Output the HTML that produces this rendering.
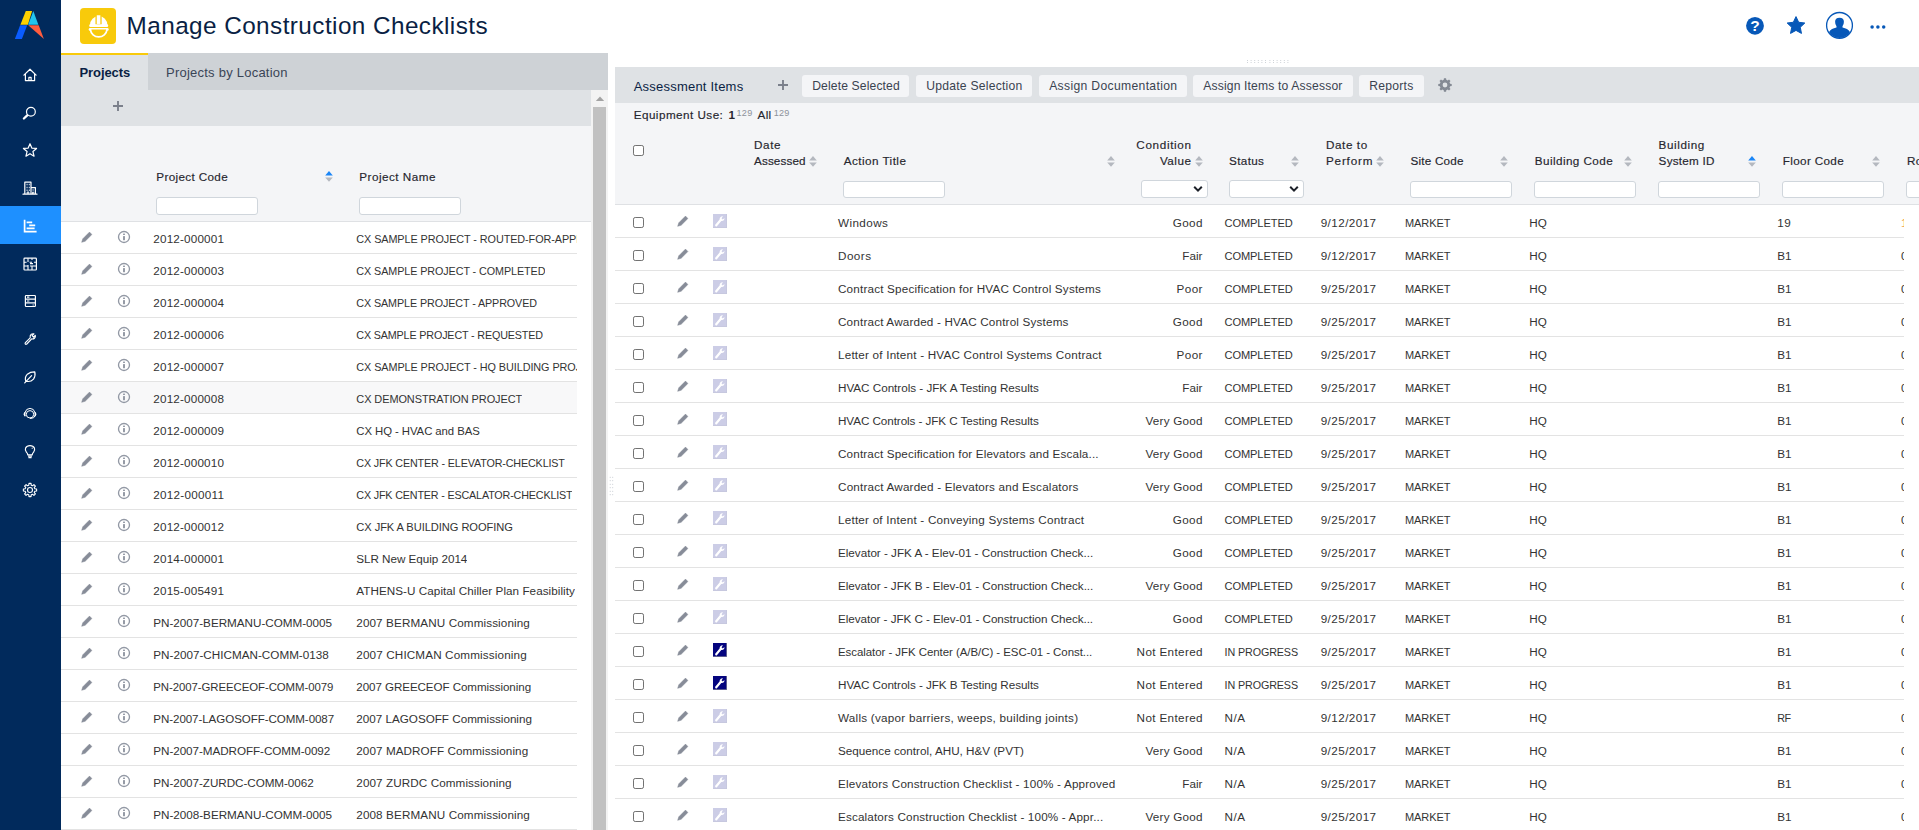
<!DOCTYPE html><html lang="en"><head><meta charset="utf-8"><title>Manage Construction Checklists</title><style>
*{box-sizing:border-box;margin:0;padding:0}
html,body{width:1919px;height:830px;overflow:hidden;background:#fff}
body{font-family:"Liberation Sans",sans-serif;color:#333;position:relative}
.abs,.t,svg.i{position:absolute}
.t{white-space:nowrap;line-height:16px;display:block}
.sb{-webkit-text-stroke:0.16px currentColor}
.b{font-weight:bold}
.hd{color:#26262e}
.inp{position:absolute;background:#fff;border:1px solid #d0d6dc;border-radius:3px}
.btn{position:absolute;top:75px;height:22px;background:#f4f5f7;border-radius:3px}
.ln{position:absolute;height:1px;background:#e3e3e3}
.cb{position:absolute;width:11px;height:11px;border:1.2px solid #727272;border-radius:2.2px;background:#fff}
</style></head><body>
<div class="abs" style="left:0;top:0;width:61px;height:830px;background:#012a5c"></div>
<div class="abs" style="left:0;top:206px;width:61px;height:38px;background:#1e90ff"></div>
<svg class="i" style="left:0;top:0" width="61" height="50" viewBox="0 0 61 50">
<polygon points="25.8,11 32.1,11 27.9,24.7 20.4,24.7" fill="#fdd000"/>
<polygon points="20.1,25.3 27.2,25.3 21.9,38.9 14.9,38.9" fill="#0a5cff"/>
<polygon points="33.3,11 28.2,24.7 38.4,24.7" fill="#22c4ee"/>
<polygon points="28.2,25.3 38.7,25.3 43.9,38.9" fill="#ff5c3e"/>
</svg>
<svg class="i" style="left:22.2px;top:67.0px" width="16" height="16" viewBox="0 0 16 16"><path d="M1.9 8.1 L8 2.2 L14.1 8.1 M3.4 7.2 V13.6 H12.6 V7.2 M6.9 13.6 V10.3 H9.1 V13.6" stroke="#fff" fill="none" stroke-width="1.2" stroke-linejoin="round" stroke-linecap="round"/></svg>
<svg class="i" style="left:22.2px;top:104.7px" width="16" height="16" viewBox="0 0 16 16"><circle cx="8.9" cy="6.7" r="4.4" stroke="#fff" fill="none" stroke-width="1.2" stroke-linejoin="round" stroke-linecap="round"/><path d="M5.2 10.4 L1.9 13.5" stroke="#fff" stroke-width="2.3" stroke-linecap="round"/></svg>
<svg class="i" style="left:22.2px;top:142.4px" width="16" height="16" viewBox="0 0 16 16"><polygon points="8.00,1.70 9.82,6.09 14.56,6.47 10.95,9.56 12.06,14.18 8.00,11.70 3.94,14.18 5.05,9.56 1.44,6.47 6.18,6.09" stroke="#fff" fill="none" stroke-width="1.2" stroke-linejoin="round" stroke-linecap="round"/></svg>
<svg class="i" style="left:22.2px;top:180.1px" width="16" height="16" viewBox="0 0 16 16"><path d="M2.8 14 V2.2 H9 V14 M9 7.6 H13.4 V14 M1 14.2 H15" stroke="#fff" fill="none" stroke-width="1.2" stroke-linejoin="round" stroke-linecap="round"/><path d="M4.6 4.6h0.9M6.8 4.6h0.9M4.6 7.4h0.9M6.8 7.4h0.9M4.6 10.2h0.9M6.8 10.2h0.9M10.6 10h0.9" stroke="#fff" stroke-width="1.5" fill="none"/><path d="M5.2 14v-2h1.6v2M10.4 14v-1.8h1.4v1.8" stroke="#fff" stroke-width="1" fill="none"/></svg>
<svg class="i" style="left:22.2px;top:217.8px" width="16" height="16" viewBox="0 0 16 16"><path d="M2.6 1.8 V13.6 H14.6" stroke="#fff" stroke-width="1.7" fill="none"/><path d="M4.6 4.4 H10.2 M7.2 7.4 H13.2 M4.6 10.4 H12.6" stroke="#fff" stroke-width="1.7" fill="none"/></svg>
<svg class="i" style="left:22.2px;top:255.5px" width="16" height="16" viewBox="0 0 16 16"><rect x="2" y="2.2" width="12.4" height="11.8" rx="0.8" stroke="#fff" fill="none" stroke-width="1.2" stroke-linejoin="round" stroke-linecap="round"/><path d="M6 2.2 V6 M6 9 V14 M2 6.2 H4.6 M7.6 6.2 H10 M12 6.2 H14.4 M10 2.2 V4 M2 10 H6 M8 10 H14.4 M10 10 V14 M8 7.6 H11" stroke="#fff" stroke-width="1.1" fill="none"/></svg>
<svg class="i" style="left:22.2px;top:293.2px" width="16" height="16" viewBox="0 0 16 16"><rect x="3.4" y="2.5" width="10" height="11" rx="0.8" stroke="#fff" fill="none" stroke-width="1.2" stroke-linejoin="round" stroke-linecap="round"/><path d="M3.4 6.1 H13.4 M3.4 9.9 H13.4" stroke="#fff" stroke-width="1.1" fill="none"/><path d="M5 4.1h2.4M5 8h2.4M10.6 12h1.2" stroke="#fff" stroke-width="1.1" fill="none"/></svg>
<svg class="i" style="left:22.2px;top:330.9px" width="16" height="16" viewBox="0 0 16 16"><path d="M3.4 11.6 L8.2 6.8 Q7.7 4.6 9.3 3.3 Q10.6 2.5 11.9 2.9 L10.1 4.7 L11.5 6.1 L13.3 4.3 Q13.7 5.8 12.7 7 Q11.5 8.3 9.7 7.9 L4.8 13 Q3.9 13.6 3.3 13 Q2.8 12.3 3.4 11.6 Z" stroke="#fff" fill="none" stroke-width="1.15" stroke-linejoin="round"/></svg>
<svg class="i" style="left:22.2px;top:368.6px" width="16" height="16" viewBox="0 0 16 16"><path d="M3.8 12.2 Q2.4 8.2 5.4 5.2 Q8.4 2.8 12.8 2.9 Q13.7 7 11.5 10.1 Q8.6 13.4 3.8 12.2 Z M2.7 13.8 L9.6 6.6" stroke="#fff" fill="none" stroke-width="1.2" stroke-linejoin="round" stroke-linecap="round" stroke-width="1.15"/></svg>
<svg class="i" style="left:22.2px;top:406.3px" width="16" height="16" viewBox="0 0 16 16"><circle cx="8" cy="8.3" r="3.7" stroke="#fff" fill="none" stroke-width="1"/><path d="M2.9 9.6 Q1.9 8.2 2.9 6.8 M13.1 6.8 Q14.1 8.2 13.1 9.6" stroke="#fff" stroke-width="1.7" fill="none" stroke-linecap="round"/><path d="M3.1 6.4 Q4 2.5 8 2.4 Q12 2.5 12.9 6.4" stroke="#fff" fill="none" stroke-width="1"/><path d="M12.9 10 Q12.3 12.3 9 12.3" stroke="#fff" fill="none" stroke-width="1"/><circle cx="8.6" cy="12.3" r="0.8" fill="#fff"/></svg>
<svg class="i" style="left:22.2px;top:444.0px" width="16" height="16" viewBox="0 0 16 16"><path d="M5.8 10.8 Q5.6 9.4 4.4 8.2 Q2.8 6.2 3.6 4 Q4.8 1.6 8 1.6 Q11.2 1.6 12.4 4 Q13.2 6.2 11.6 8.2 Q10.4 9.4 10.2 10.8 Z" stroke="#fff" fill="none" stroke-width="1.2" stroke-linejoin="round" stroke-linecap="round"/><path d="M6 12.2 H10 M6.4 13.6 H9.6" stroke="#fff" stroke-width="1.3" fill="none"/><circle cx="10.2" cy="4.2" r="0.6" fill="#fff"/></svg>
<svg class="i" style="left:22.2px;top:481.7px" width="16" height="16" viewBox="0 0 16 16"><path d="M12.85 6.79 L14.62 6.96 L14.62 9.04 L12.85 9.21 L12.28 10.58 L13.42 11.94 L11.94 13.42 L10.58 12.28 L9.21 12.85 L9.04 14.62 L6.96 14.62 L6.79 12.85 L5.42 12.28 L4.06 13.42 L2.58 11.94 L3.72 10.58 L3.15 9.21 L1.38 9.04 L1.38 6.96 L3.15 6.79 L3.72 5.42 L2.58 4.06 L4.06 2.58 L5.42 3.72 L6.79 3.15 L6.96 1.38 L9.04 1.38 L9.21 3.15 L10.58 3.72 L11.94 2.58 L13.42 4.06 L12.28 5.42Z" stroke="#fff" fill="none" stroke-width="1.1" stroke-linejoin="round"/><circle cx="8" cy="8" r="2.5" stroke="#fff" fill="none" stroke-width="1.1"/></svg>
<div class="abs" style="left:80px;top:8px;width:36px;height:36px;border-radius:4px;background:#f8ca0b"></div>
<svg class="i" style="left:80px;top:8px" width="36" height="36" viewBox="80 8 36 36"><path d="M90 25 A8.7 8.9 0 0 1 107.4 25 Z" fill="#fff"/><rect x="96.1" y="14.6" width="4.9" height="10" fill="#fff" stroke="#f8ca0b" stroke-width="1.3"/><rect x="89.2" y="24.2" width="19" height="2.8" rx="1.2" fill="#fff"/><rect x="90" y="28" width="17.4" height="1.5" fill="#fff"/><path d="M90.4 29.6 A8.35 8.2 0 0 0 107 29.6" stroke="#fff" stroke-width="1.7" fill="none"/><circle cx="90" cy="29.4" r="1.3" fill="#fff"/><circle cx="107.4" cy="29.4" r="1.3" fill="#fff"/></svg>
<span class="t " style="top:10.38px;font-size:24.30px;letter-spacing:0.434px;line-height:32px;left:126.60px;color:#0a1f44;">Manage Construction Checklists</span>
<svg class="i" style="left:1745px;top:15px" width="20" height="21" viewBox="1745 15 20 21"><circle cx="1755" cy="25.8" r="8.9" fill="#0758b8"/><text x="1755" y="31.3" text-anchor="middle" font-family="Liberation Sans, sans-serif" font-weight="bold" font-size="15.5" fill="#fff">?</text></svg>
<svg class="i" style="left:1785px;top:14px" width="22" height="22" viewBox="1785 14 22 22"><polygon points="1796.00,16.60 1798.65,22.26 1804.84,23.03 1800.28,27.29 1801.47,33.42 1796.00,30.40 1790.53,33.42 1791.72,27.29 1787.16,23.03 1793.35,22.26" fill="#0758b8" stroke="#0758b8" stroke-width="1" stroke-linejoin="round"/></svg>
<svg class="i" style="left:1825px;top:11px" width="29" height="29" viewBox="1825 11 29 29"><defs><clipPath id="pc"><circle cx="1839.5" cy="25.4" r="12.6"/></clipPath></defs><circle cx="1839.5" cy="25.4" r="12.9" fill="#fff" stroke="#0758b8" stroke-width="1.3"/><g clip-path="url(#pc)" fill="#0758b8"><path d="M1835.1 21.8 Q1835.1 17.7 1839.5 17.7 Q1843.9 17.7 1843.9 21.8 Q1843.9 24.8 1842.5 26.3 V27.4 Q1847.8 28.4 1849.8 31.8 L1851 40 H1828 L1829.2 31.8 Q1831.2 28.4 1836.5 27.4 V26.3 Q1835.1 24.8 1835.1 21.8Z"/></g></svg>
<svg class="i" style="left:1869px;top:24px" width="18" height="6" viewBox="1869 24 18 6"><circle cx="1872.1" cy="26.9" r="1.75" fill="#0758b8"/><circle cx="1877.9" cy="26.9" r="1.75" fill="#0758b8"/><circle cx="1883.7" cy="26.9" r="1.75" fill="#0758b8"/></svg>
<div class="abs" style="left:61px;top:53px;width:547px;height:37px;background:#ced2d6"></div>
<div class="abs" style="left:61px;top:53px;width:87px;height:37px;background:#dfe2e5;border-top:2px solid #f8ca0b"></div>
<div class="abs" style="left:61px;top:90px;width:530px;height:36px;background:#dfe2e5"></div>
<div class="abs" style="left:61px;top:126px;width:530px;height:96px;background:#f4f5f7;border-bottom:1px solid #dfe1e4"></div>
<span class="t b" style="top:64.50px;font-size:13.00px;letter-spacing:-0.083px;left:79.50px;color:#0a1f44;">Projects</span>
<span class="t " style="top:64.50px;font-size:13.00px;letter-spacing:0.235px;left:166.00px;color:#3a4556;">Projects by Location</span>
<svg class="i" style="left:112px;top:100px" width="12" height="12" viewBox="0 0 12 12"><path d="M6 1v10M1 6h10" stroke="#7b808b" stroke-width="1.9" fill="none"/></svg>
<span class="t sb hd" style="top:168.95px;font-size:11.70px;letter-spacing:0.348px;left:156.30px;">Project Code</span>
<span class="t sb hd" style="top:168.95px;font-size:11.70px;letter-spacing:0.485px;left:359.30px;">Project Name</span>
<div class="inp" style="left:156px;top:197px;width:102px;height:18px"></div>
<div class="inp" style="left:359px;top:197px;width:102px;height:18px"></div>
<svg class="i" style="left:324.6px;top:170.8px" width="8" height="12" viewBox="0 0 8 12"><path d="M0.2 4.5 L4 0 L7.8 4.5Z" fill="#1a86f7"/><path d="M0.2 6.5 L4 10.8 L7.8 6.5Z" fill="#b4b8bf"/></svg>
<div class="ln" style="left:61px;top:253.0px;width:516px"></div>
<svg class="i" style="left:81.3px;top:230.8px" width="12" height="12" viewBox="0 0 12 12"><path d="M8.5 1.1 L10.9 3.5 L4.2 10.2 L0.7 11.3 L1.8 7.8 Z" fill="#878c98" stroke="#878c98" stroke-width="0.5" stroke-linejoin="round"/></svg>
<svg class="i" style="left:117.0px;top:230.2px" width="14" height="14" viewBox="0 0 14 14"><circle cx="7" cy="7" r="5.5" fill="none" stroke="#9298a4" stroke-width="1.35"/><rect x="6.1" y="6" width="1.8" height="4.2" rx="0.5" fill="#8a909c"/><rect x="6.1" y="3.4" width="1.8" height="1.7" rx="0.6" fill="#8a909c"/></svg>
<span class="t " style="top:230.95px;font-size:11.70px;letter-spacing:0.176px;left:153.30px;">2012-000001</span>
<span class="t " style="top:231.24px;font-size:10.84px;letter-spacing:-0.073px;max-width:220.7px;overflow:hidden;left:356.30px;">CX SAMPLE PROJECT - ROUTED-FOR-APPROVAL</span>
<div class="ln" style="left:61px;top:285.0px;width:516px"></div>
<svg class="i" style="left:81.3px;top:262.8px" width="12" height="12" viewBox="0 0 12 12"><path d="M8.5 1.1 L10.9 3.5 L4.2 10.2 L0.7 11.3 L1.8 7.8 Z" fill="#878c98" stroke="#878c98" stroke-width="0.5" stroke-linejoin="round"/></svg>
<svg class="i" style="left:117.0px;top:262.2px" width="14" height="14" viewBox="0 0 14 14"><circle cx="7" cy="7" r="5.5" fill="none" stroke="#9298a4" stroke-width="1.35"/><rect x="6.1" y="6" width="1.8" height="4.2" rx="0.5" fill="#8a909c"/><rect x="6.1" y="3.4" width="1.8" height="1.7" rx="0.6" fill="#8a909c"/></svg>
<span class="t " style="top:262.95px;font-size:11.70px;letter-spacing:0.176px;left:153.30px;">2012-000003</span>
<span class="t " style="top:263.27px;font-size:10.78px;letter-spacing:-0.074px;max-width:220.7px;overflow:hidden;left:356.30px;">CX SAMPLE PROJECT - COMPLETED</span>
<div class="ln" style="left:61px;top:317.0px;width:516px"></div>
<svg class="i" style="left:81.3px;top:294.8px" width="12" height="12" viewBox="0 0 12 12"><path d="M8.5 1.1 L10.9 3.5 L4.2 10.2 L0.7 11.3 L1.8 7.8 Z" fill="#878c98" stroke="#878c98" stroke-width="0.5" stroke-linejoin="round"/></svg>
<svg class="i" style="left:117.0px;top:294.2px" width="14" height="14" viewBox="0 0 14 14"><circle cx="7" cy="7" r="5.5" fill="none" stroke="#9298a4" stroke-width="1.35"/><rect x="6.1" y="6" width="1.8" height="4.2" rx="0.5" fill="#8a909c"/><rect x="6.1" y="3.4" width="1.8" height="1.7" rx="0.6" fill="#8a909c"/></svg>
<span class="t " style="top:294.95px;font-size:11.70px;letter-spacing:0.176px;left:153.30px;">2012-000004</span>
<span class="t " style="top:295.27px;font-size:10.76px;letter-spacing:-0.091px;max-width:220.7px;overflow:hidden;left:356.30px;">CX SAMPLE PROJECT - APPROVED</span>
<div class="ln" style="left:61px;top:349.0px;width:516px"></div>
<svg class="i" style="left:81.3px;top:326.8px" width="12" height="12" viewBox="0 0 12 12"><path d="M8.5 1.1 L10.9 3.5 L4.2 10.2 L0.7 11.3 L1.8 7.8 Z" fill="#878c98" stroke="#878c98" stroke-width="0.5" stroke-linejoin="round"/></svg>
<svg class="i" style="left:117.0px;top:326.2px" width="14" height="14" viewBox="0 0 14 14"><circle cx="7" cy="7" r="5.5" fill="none" stroke="#9298a4" stroke-width="1.35"/><rect x="6.1" y="6" width="1.8" height="4.2" rx="0.5" fill="#8a909c"/><rect x="6.1" y="3.4" width="1.8" height="1.7" rx="0.6" fill="#8a909c"/></svg>
<span class="t " style="top:326.95px;font-size:11.70px;letter-spacing:0.176px;left:153.30px;">2012-000006</span>
<span class="t " style="top:327.27px;font-size:10.76px;letter-spacing:-0.152px;max-width:220.7px;overflow:hidden;left:356.30px;">CX SAMPLE PROJECT - REQUESTED</span>
<div class="ln" style="left:61px;top:381.0px;width:516px"></div>
<svg class="i" style="left:81.3px;top:358.8px" width="12" height="12" viewBox="0 0 12 12"><path d="M8.5 1.1 L10.9 3.5 L4.2 10.2 L0.7 11.3 L1.8 7.8 Z" fill="#878c98" stroke="#878c98" stroke-width="0.5" stroke-linejoin="round"/></svg>
<svg class="i" style="left:117.0px;top:358.2px" width="14" height="14" viewBox="0 0 14 14"><circle cx="7" cy="7" r="5.5" fill="none" stroke="#9298a4" stroke-width="1.35"/><rect x="6.1" y="6" width="1.8" height="4.2" rx="0.5" fill="#8a909c"/><rect x="6.1" y="3.4" width="1.8" height="1.7" rx="0.6" fill="#8a909c"/></svg>
<span class="t " style="top:358.95px;font-size:11.70px;letter-spacing:0.176px;left:153.30px;">2012-000007</span>
<span class="t " style="top:359.24px;font-size:10.84px;letter-spacing:-0.071px;max-width:220.7px;overflow:hidden;left:356.30px;">CX SAMPLE PROJECT - HQ BUILDING PROJECT</span>
<div class="abs" style="left:61px;top:382px;width:516px;height:31px;background:#f8f8f9"></div>
<div class="ln" style="left:61px;top:413.0px;width:516px"></div>
<svg class="i" style="left:81.3px;top:390.8px" width="12" height="12" viewBox="0 0 12 12"><path d="M8.5 1.1 L10.9 3.5 L4.2 10.2 L0.7 11.3 L1.8 7.8 Z" fill="#878c98" stroke="#878c98" stroke-width="0.5" stroke-linejoin="round"/></svg>
<svg class="i" style="left:117.0px;top:390.2px" width="14" height="14" viewBox="0 0 14 14"><circle cx="7" cy="7" r="5.5" fill="none" stroke="#9298a4" stroke-width="1.35"/><rect x="6.1" y="6" width="1.8" height="4.2" rx="0.5" fill="#8a909c"/><rect x="6.1" y="3.4" width="1.8" height="1.7" rx="0.6" fill="#8a909c"/></svg>
<span class="t " style="top:390.95px;font-size:11.70px;letter-spacing:0.176px;left:153.30px;">2012-000008</span>
<span class="t " style="top:391.20px;font-size:10.96px;letter-spacing:-0.078px;max-width:220.7px;overflow:hidden;left:356.30px;">CX DEMONSTRATION PROJECT</span>
<div class="ln" style="left:61px;top:445.0px;width:516px"></div>
<svg class="i" style="left:81.3px;top:422.8px" width="12" height="12" viewBox="0 0 12 12"><path d="M8.5 1.1 L10.9 3.5 L4.2 10.2 L0.7 11.3 L1.8 7.8 Z" fill="#878c98" stroke="#878c98" stroke-width="0.5" stroke-linejoin="round"/></svg>
<svg class="i" style="left:117.0px;top:422.2px" width="14" height="14" viewBox="0 0 14 14"><circle cx="7" cy="7" r="5.5" fill="none" stroke="#9298a4" stroke-width="1.35"/><rect x="6.1" y="6" width="1.8" height="4.2" rx="0.5" fill="#8a909c"/><rect x="6.1" y="3.4" width="1.8" height="1.7" rx="0.6" fill="#8a909c"/></svg>
<span class="t " style="top:422.95px;font-size:11.70px;letter-spacing:0.176px;left:153.30px;">2012-000009</span>
<span class="t " style="top:423.06px;font-size:11.37px;letter-spacing:-0.068px;max-width:220.7px;overflow:hidden;left:356.30px;">CX HQ - HVAC and BAS</span>
<div class="ln" style="left:61px;top:477.0px;width:516px"></div>
<svg class="i" style="left:81.3px;top:454.8px" width="12" height="12" viewBox="0 0 12 12"><path d="M8.5 1.1 L10.9 3.5 L4.2 10.2 L0.7 11.3 L1.8 7.8 Z" fill="#878c98" stroke="#878c98" stroke-width="0.5" stroke-linejoin="round"/></svg>
<svg class="i" style="left:117.0px;top:454.2px" width="14" height="14" viewBox="0 0 14 14"><circle cx="7" cy="7" r="5.5" fill="none" stroke="#9298a4" stroke-width="1.35"/><rect x="6.1" y="6" width="1.8" height="4.2" rx="0.5" fill="#8a909c"/><rect x="6.1" y="3.4" width="1.8" height="1.7" rx="0.6" fill="#8a909c"/></svg>
<span class="t " style="top:454.95px;font-size:11.70px;letter-spacing:0.176px;left:153.30px;">2012-000010</span>
<span class="t " style="top:455.27px;font-size:10.76px;letter-spacing:-0.140px;max-width:220.7px;overflow:hidden;left:356.30px;">CX JFK CENTER - ELEVATOR-CHECKLIST</span>
<div class="ln" style="left:61px;top:509.0px;width:516px"></div>
<svg class="i" style="left:81.3px;top:486.8px" width="12" height="12" viewBox="0 0 12 12"><path d="M8.5 1.1 L10.9 3.5 L4.2 10.2 L0.7 11.3 L1.8 7.8 Z" fill="#878c98" stroke="#878c98" stroke-width="0.5" stroke-linejoin="round"/></svg>
<svg class="i" style="left:117.0px;top:486.2px" width="14" height="14" viewBox="0 0 14 14"><circle cx="7" cy="7" r="5.5" fill="none" stroke="#9298a4" stroke-width="1.35"/><rect x="6.1" y="6" width="1.8" height="4.2" rx="0.5" fill="#8a909c"/><rect x="6.1" y="3.4" width="1.8" height="1.7" rx="0.6" fill="#8a909c"/></svg>
<span class="t " style="top:486.95px;font-size:11.70px;letter-spacing:0.263px;left:153.30px;">2012-000011</span>
<span class="t " style="top:487.27px;font-size:10.76px;letter-spacing:-0.161px;max-width:220.7px;overflow:hidden;left:356.30px;">CX JFK CENTER - ESCALATOR-CHECKLIST</span>
<div class="ln" style="left:61px;top:541.0px;width:516px"></div>
<svg class="i" style="left:81.3px;top:518.8px" width="12" height="12" viewBox="0 0 12 12"><path d="M8.5 1.1 L10.9 3.5 L4.2 10.2 L0.7 11.3 L1.8 7.8 Z" fill="#878c98" stroke="#878c98" stroke-width="0.5" stroke-linejoin="round"/></svg>
<svg class="i" style="left:117.0px;top:518.2px" width="14" height="14" viewBox="0 0 14 14"><circle cx="7" cy="7" r="5.5" fill="none" stroke="#9298a4" stroke-width="1.35"/><rect x="6.1" y="6" width="1.8" height="4.2" rx="0.5" fill="#8a909c"/><rect x="6.1" y="3.4" width="1.8" height="1.7" rx="0.6" fill="#8a909c"/></svg>
<span class="t " style="top:518.95px;font-size:11.70px;letter-spacing:0.176px;left:153.30px;">2012-000012</span>
<span class="t " style="top:519.14px;font-size:11.14px;letter-spacing:-0.069px;max-width:220.7px;overflow:hidden;left:356.30px;">CX JFK A BUILDING ROOFING</span>
<div class="ln" style="left:61px;top:573.0px;width:516px"></div>
<svg class="i" style="left:81.3px;top:550.8px" width="12" height="12" viewBox="0 0 12 12"><path d="M8.5 1.1 L10.9 3.5 L4.2 10.2 L0.7 11.3 L1.8 7.8 Z" fill="#878c98" stroke="#878c98" stroke-width="0.5" stroke-linejoin="round"/></svg>
<svg class="i" style="left:117.0px;top:550.2px" width="14" height="14" viewBox="0 0 14 14"><circle cx="7" cy="7" r="5.5" fill="none" stroke="#9298a4" stroke-width="1.35"/><rect x="6.1" y="6" width="1.8" height="4.2" rx="0.5" fill="#8a909c"/><rect x="6.1" y="3.4" width="1.8" height="1.7" rx="0.6" fill="#8a909c"/></svg>
<span class="t " style="top:550.95px;font-size:11.70px;letter-spacing:0.176px;left:153.30px;">2014-000001</span>
<span class="t " style="top:550.95px;font-size:11.70px;letter-spacing:-0.041px;max-width:220.7px;overflow:hidden;left:356.30px;">SLR New Equip 2014</span>
<div class="ln" style="left:61px;top:605.0px;width:516px"></div>
<svg class="i" style="left:81.3px;top:582.8px" width="12" height="12" viewBox="0 0 12 12"><path d="M8.5 1.1 L10.9 3.5 L4.2 10.2 L0.7 11.3 L1.8 7.8 Z" fill="#878c98" stroke="#878c98" stroke-width="0.5" stroke-linejoin="round"/></svg>
<svg class="i" style="left:117.0px;top:582.2px" width="14" height="14" viewBox="0 0 14 14"><circle cx="7" cy="7" r="5.5" fill="none" stroke="#9298a4" stroke-width="1.35"/><rect x="6.1" y="6" width="1.8" height="4.2" rx="0.5" fill="#8a909c"/><rect x="6.1" y="3.4" width="1.8" height="1.7" rx="0.6" fill="#8a909c"/></svg>
<span class="t " style="top:582.95px;font-size:11.70px;letter-spacing:0.176px;left:153.30px;">2015-005491</span>
<span class="t " style="top:582.95px;font-size:11.70px;letter-spacing:0.045px;max-width:220.7px;overflow:hidden;left:356.30px;">ATHENS-U Capital Chiller Plan Feasibility</span>
<div class="ln" style="left:61px;top:637.0px;width:516px"></div>
<svg class="i" style="left:81.3px;top:614.8px" width="12" height="12" viewBox="0 0 12 12"><path d="M8.5 1.1 L10.9 3.5 L4.2 10.2 L0.7 11.3 L1.8 7.8 Z" fill="#878c98" stroke="#878c98" stroke-width="0.5" stroke-linejoin="round"/></svg>
<svg class="i" style="left:117.0px;top:614.2px" width="14" height="14" viewBox="0 0 14 14"><circle cx="7" cy="7" r="5.5" fill="none" stroke="#9298a4" stroke-width="1.35"/><rect x="6.1" y="6" width="1.8" height="4.2" rx="0.5" fill="#8a909c"/><rect x="6.1" y="3.4" width="1.8" height="1.7" rx="0.6" fill="#8a909c"/></svg>
<span class="t " style="top:614.95px;font-size:11.70px;letter-spacing:-0.024px;left:153.30px;">PN-2007-BERMANU-COMM-0005</span>
<span class="t " style="top:614.95px;font-size:11.70px;letter-spacing:0.109px;max-width:220.7px;overflow:hidden;left:356.30px;">2007 BERMANU Commissioning</span>
<div class="ln" style="left:61px;top:669.0px;width:516px"></div>
<svg class="i" style="left:81.3px;top:646.8px" width="12" height="12" viewBox="0 0 12 12"><path d="M8.5 1.1 L10.9 3.5 L4.2 10.2 L0.7 11.3 L1.8 7.8 Z" fill="#878c98" stroke="#878c98" stroke-width="0.5" stroke-linejoin="round"/></svg>
<svg class="i" style="left:117.0px;top:646.2px" width="14" height="14" viewBox="0 0 14 14"><circle cx="7" cy="7" r="5.5" fill="none" stroke="#9298a4" stroke-width="1.35"/><rect x="6.1" y="6" width="1.8" height="4.2" rx="0.5" fill="#8a909c"/><rect x="6.1" y="3.4" width="1.8" height="1.7" rx="0.6" fill="#8a909c"/></svg>
<span class="t " style="top:646.95px;font-size:11.70px;letter-spacing:0.006px;left:153.30px;">PN-2007-CHICMAN-COMM-0138</span>
<span class="t " style="top:646.95px;font-size:11.70px;letter-spacing:0.138px;max-width:220.7px;overflow:hidden;left:356.30px;">2007 CHICMAN Commissioning</span>
<div class="ln" style="left:61px;top:701.0px;width:516px"></div>
<svg class="i" style="left:81.3px;top:678.8px" width="12" height="12" viewBox="0 0 12 12"><path d="M8.5 1.1 L10.9 3.5 L4.2 10.2 L0.7 11.3 L1.8 7.8 Z" fill="#878c98" stroke="#878c98" stroke-width="0.5" stroke-linejoin="round"/></svg>
<svg class="i" style="left:117.0px;top:678.2px" width="14" height="14" viewBox="0 0 14 14"><circle cx="7" cy="7" r="5.5" fill="none" stroke="#9298a4" stroke-width="1.35"/><rect x="6.1" y="6" width="1.8" height="4.2" rx="0.5" fill="#8a909c"/><rect x="6.1" y="3.4" width="1.8" height="1.7" rx="0.6" fill="#8a909c"/></svg>
<span class="t " style="top:679.05px;font-size:11.41px;letter-spacing:-0.075px;left:153.30px;">PN-2007-GREECEOF-COMM-0079</span>
<span class="t " style="top:678.98px;font-size:11.60px;letter-spacing:-0.068px;max-width:220.7px;overflow:hidden;left:356.30px;">2007 GREECEOF Commissioning</span>
<div class="ln" style="left:61px;top:733.0px;width:516px"></div>
<svg class="i" style="left:81.3px;top:710.8px" width="12" height="12" viewBox="0 0 12 12"><path d="M8.5 1.1 L10.9 3.5 L4.2 10.2 L0.7 11.3 L1.8 7.8 Z" fill="#878c98" stroke="#878c98" stroke-width="0.5" stroke-linejoin="round"/></svg>
<svg class="i" style="left:117.0px;top:710.2px" width="14" height="14" viewBox="0 0 14 14"><circle cx="7" cy="7" r="5.5" fill="none" stroke="#9298a4" stroke-width="1.35"/><rect x="6.1" y="6" width="1.8" height="4.2" rx="0.5" fill="#8a909c"/><rect x="6.1" y="3.4" width="1.8" height="1.7" rx="0.6" fill="#8a909c"/></svg>
<span class="t " style="top:710.99px;font-size:11.58px;letter-spacing:-0.074px;left:153.30px;">PN-2007-LAGOSOFF-COMM-0087</span>
<span class="t " style="top:710.95px;font-size:11.70px;letter-spacing:-0.015px;max-width:220.7px;overflow:hidden;left:356.30px;">2007 LAGOSOFF Commissioning</span>
<div class="ln" style="left:61px;top:765.0px;width:516px"></div>
<svg class="i" style="left:81.3px;top:742.8px" width="12" height="12" viewBox="0 0 12 12"><path d="M8.5 1.1 L10.9 3.5 L4.2 10.2 L0.7 11.3 L1.8 7.8 Z" fill="#878c98" stroke="#878c98" stroke-width="0.5" stroke-linejoin="round"/></svg>
<svg class="i" style="left:117.0px;top:742.2px" width="14" height="14" viewBox="0 0 14 14"><circle cx="7" cy="7" r="5.5" fill="none" stroke="#9298a4" stroke-width="1.35"/><rect x="6.1" y="6" width="1.8" height="4.2" rx="0.5" fill="#8a909c"/><rect x="6.1" y="3.4" width="1.8" height="1.7" rx="0.6" fill="#8a909c"/></svg>
<span class="t " style="top:742.95px;font-size:11.70px;letter-spacing:-0.067px;left:153.30px;">PN-2007-MADROFF-COMM-0092</span>
<span class="t " style="top:742.95px;font-size:11.70px;letter-spacing:0.067px;max-width:220.7px;overflow:hidden;left:356.30px;">2007 MADROFF Commissioning</span>
<div class="ln" style="left:61px;top:797.0px;width:516px"></div>
<svg class="i" style="left:81.3px;top:774.8px" width="12" height="12" viewBox="0 0 12 12"><path d="M8.5 1.1 L10.9 3.5 L4.2 10.2 L0.7 11.3 L1.8 7.8 Z" fill="#878c98" stroke="#878c98" stroke-width="0.5" stroke-linejoin="round"/></svg>
<svg class="i" style="left:117.0px;top:774.2px" width="14" height="14" viewBox="0 0 14 14"><circle cx="7" cy="7" r="5.5" fill="none" stroke="#9298a4" stroke-width="1.35"/><rect x="6.1" y="6" width="1.8" height="4.2" rx="0.5" fill="#8a909c"/><rect x="6.1" y="3.4" width="1.8" height="1.7" rx="0.6" fill="#8a909c"/></svg>
<span class="t " style="top:774.95px;font-size:11.70px;letter-spacing:-0.060px;left:153.30px;">PN-2007-ZURDC-COMM-0062</span>
<span class="t " style="top:774.95px;font-size:11.70px;letter-spacing:0.086px;max-width:220.7px;overflow:hidden;left:356.30px;">2007 ZURDC Commissioning</span>
<div class="ln" style="left:61px;top:829.0px;width:516px"></div>
<svg class="i" style="left:81.3px;top:806.8px" width="12" height="12" viewBox="0 0 12 12"><path d="M8.5 1.1 L10.9 3.5 L4.2 10.2 L0.7 11.3 L1.8 7.8 Z" fill="#878c98" stroke="#878c98" stroke-width="0.5" stroke-linejoin="round"/></svg>
<svg class="i" style="left:117.0px;top:806.2px" width="14" height="14" viewBox="0 0 14 14"><circle cx="7" cy="7" r="5.5" fill="none" stroke="#9298a4" stroke-width="1.35"/><rect x="6.1" y="6" width="1.8" height="4.2" rx="0.5" fill="#8a909c"/><rect x="6.1" y="3.4" width="1.8" height="1.7" rx="0.6" fill="#8a909c"/></svg>
<span class="t " style="top:806.95px;font-size:11.70px;letter-spacing:-0.024px;left:153.30px;">PN-2008-BERMANU-COMM-0005</span>
<span class="t " style="top:806.95px;font-size:11.70px;letter-spacing:0.109px;max-width:220.7px;overflow:hidden;left:356.30px;">2008 BERMANU Commissioning</span>
<div class="abs" style="left:577px;top:222px;width:14px;height:608px;background:#fff"></div>
<div class="abs" style="left:591px;top:90px;width:17px;height:740px;background:#f3f3f3"></div>
<div class="abs" style="left:593px;top:107px;width:13px;height:723px;background:#c1c1c1"></div>
<svg class="i" style="left:595px;top:95.3px" width="10" height="7" viewBox="0 0 10 7"><path d="M0.8 6 L5 1.6 L9.2 6 Z" fill="#a3a3a3"/></svg>
<svg class="i" style="left:609px;top:476px" width="6" height="22" viewBox="0 0 6 22"><rect x="0.7" y="0.8" width="1.1" height="1.1" fill="#d3d6db"/><rect x="0.7" y="4.1" width="1.1" height="1.1" fill="#d3d6db"/><rect x="0.7" y="7.8" width="1.1" height="1.1" fill="#d3d6db"/><rect x="0.7" y="11.1" width="1.1" height="1.1" fill="#d3d6db"/><rect x="0.7" y="14.8" width="1.1" height="1.1" fill="#d3d6db"/><rect x="0.7" y="18.1" width="1.1" height="1.1" fill="#d3d6db"/><rect x="3.1" y="0.8" width="1.1" height="1.1" fill="#d3d6db"/><rect x="3.1" y="4.1" width="1.1" height="1.1" fill="#d3d6db"/><rect x="3.1" y="7.8" width="1.1" height="1.1" fill="#d3d6db"/><rect x="3.1" y="11.1" width="1.1" height="1.1" fill="#d3d6db"/><rect x="3.1" y="14.8" width="1.1" height="1.1" fill="#d3d6db"/><rect x="3.1" y="18.1" width="1.1" height="1.1" fill="#d3d6db"/></svg>
<svg class="i" style="left:1246px;top:59px" width="46" height="5" viewBox="0 0 46 5"><rect x="1.0" y="1" width="1" height="1" fill="#cfd3d8"/><rect x="4.6" y="1" width="1" height="1" fill="#cfd3d8"/><rect x="8.2" y="1" width="1" height="1" fill="#cfd3d8"/><rect x="11.8" y="1" width="1" height="1" fill="#cfd3d8"/><rect x="15.4" y="1" width="1" height="1" fill="#cfd3d8"/><rect x="19.0" y="1" width="1" height="1" fill="#cfd3d8"/><rect x="23.4" y="1" width="1" height="1" fill="#cfd3d8"/><rect x="27.0" y="1" width="1" height="1" fill="#cfd3d8"/><rect x="30.6" y="1" width="1" height="1" fill="#cfd3d8"/><rect x="34.2" y="1" width="1" height="1" fill="#cfd3d8"/><rect x="37.8" y="1" width="1" height="1" fill="#cfd3d8"/><rect x="41.4" y="1" width="1" height="1" fill="#cfd3d8"/><rect x="1.0" y="3" width="1" height="1" fill="#cfd3d8"/><rect x="4.6" y="3" width="1" height="1" fill="#cfd3d8"/><rect x="8.2" y="3" width="1" height="1" fill="#cfd3d8"/><rect x="11.8" y="3" width="1" height="1" fill="#cfd3d8"/><rect x="15.4" y="3" width="1" height="1" fill="#cfd3d8"/><rect x="19.0" y="3" width="1" height="1" fill="#cfd3d8"/><rect x="23.4" y="3" width="1" height="1" fill="#cfd3d8"/><rect x="27.0" y="3" width="1" height="1" fill="#cfd3d8"/><rect x="30.6" y="3" width="1" height="1" fill="#cfd3d8"/><rect x="34.2" y="3" width="1" height="1" fill="#cfd3d8"/><rect x="37.8" y="3" width="1" height="1" fill="#cfd3d8"/><rect x="41.4" y="3" width="1" height="1" fill="#cfd3d8"/></svg>
<div class="abs" style="left:615px;top:67px;width:1304px;height:36px;background:#dfe2e5"></div>
<div class="abs" style="left:615px;top:103px;width:1304px;height:102px;background:#f4f5f7;border-bottom:1px solid #dfe1e4"></div>
<span class="t " style="top:78.50px;font-size:13.00px;letter-spacing:0.217px;left:633.70px;color:#0a1f44;">Assessment Items</span>
<svg class="i" style="left:777px;top:79px" width="12" height="12" viewBox="0 0 12 12"><path d="M6 1v10M1 6h10" stroke="#7b808b" stroke-width="1.9" fill="none"/></svg>
<div class="btn" style="left:802.0px;width:107.0px"></div>
<span class="t " style="top:77.99px;font-size:12.15px;letter-spacing:0.130px;left:812.20px;color:#3a4350;">Delete Selected</span>
<div class="btn" style="left:916.0px;width:116.0px"></div>
<span class="t " style="top:77.99px;font-size:12.15px;letter-spacing:0.240px;left:926.20px;color:#3a4350;">Update Selection</span>
<div class="btn" style="left:1039.0px;width:148.0px"></div>
<span class="t " style="top:77.99px;font-size:12.15px;letter-spacing:0.335px;left:1049.20px;color:#3a4350;">Assign Documentation</span>
<div class="btn" style="left:1193.0px;width:159.5px"></div>
<span class="t " style="top:77.99px;font-size:12.15px;letter-spacing:0.153px;left:1203.20px;color:#3a4350;">Assign Items to Assessor</span>
<div class="btn" style="left:1359.0px;width:64.7px"></div>
<span class="t " style="top:77.99px;font-size:12.15px;letter-spacing:0.273px;left:1369.20px;color:#3a4350;">Reports</span>
<svg class="i" style="left:1437px;top:77px" width="16" height="16" viewBox="0 0 16 16"><path fill-rule="evenodd" d="M13.14 6.72 L14.72 6.94 L14.72 9.06 L13.14 9.28 L12.54 10.73 L13.50 12.00 L12.00 13.50 L10.73 12.54 L9.28 13.14 L9.06 14.72 L6.94 14.72 L6.72 13.14 L5.27 12.54 L4.00 13.50 L2.50 12.00 L3.46 10.73 L2.86 9.28 L1.28 9.06 L1.28 6.94 L2.86 6.72 L3.46 5.27 L2.50 4.00 L4.00 2.50 L5.27 3.46 L6.72 2.86 L6.94 1.28 L9.06 1.28 L9.28 2.86 L10.73 3.46 L12.00 2.50 L13.50 4.00 L12.54 5.27Z M10.4 8 A2.4 2.4 0 1 0 5.6 8 A2.4 2.4 0 1 0 10.4 8Z" fill="#848a94"/></svg>
<span class="t sb hd" style="top:106.95px;font-size:11.70px;letter-spacing:0.462px;left:633.70px;">Equipment Use:</span>
<span class="t b hd" style="top:106.95px;font-size:11.70px;letter-spacing:0.000px;left:728.50px;">1</span>
<span class="t " style="top:105.05px;font-size:9.10px;letter-spacing:0.211px;left:736.60px;color:#8d929b;">129</span>
<span class="t sb hd" style="top:106.95px;font-size:11.70px;letter-spacing:0.361px;left:757.50px;">All</span>
<span class="t " style="top:105.05px;font-size:9.10px;letter-spacing:0.211px;left:773.80px;color:#8d929b;">129</span>
<div class="cb" style="left:633px;top:145px"></div>
<span class="t sb hd" style="top:136.95px;font-size:11.70px;letter-spacing:0.600px;left:754.00px;">Date</span>
<span class="t sb hd" style="top:152.95px;font-size:11.70px;letter-spacing:0.122px;left:754.00px;">Assessed</span>
<svg class="i" style="left:809.0px;top:155.9px" width="8" height="12" viewBox="0 0 8 12"><path d="M0.2 4.5 L4 0 L7.8 4.5Z" fill="#b4b8bf"/><path d="M0.2 6.5 L4 10.8 L7.8 6.5Z" fill="#b4b8bf"/></svg>
<span class="t sb hd" style="top:152.95px;font-size:11.70px;letter-spacing:0.462px;left:843.70px;">Action Title</span>
<svg class="i" style="left:1106.7px;top:155.9px" width="8" height="12" viewBox="0 0 8 12"><path d="M0.2 4.5 L4 0 L7.8 4.5Z" fill="#b4b8bf"/><path d="M0.2 6.5 L4 10.8 L7.8 6.5Z" fill="#b4b8bf"/></svg>
<span class="t sb hd" style="top:136.95px;font-size:11.70px;letter-spacing:0.662px;right:727.34px;">Condition</span>
<span class="t sb hd" style="top:152.95px;font-size:11.70px;letter-spacing:0.512px;right:727.49px;">Value</span>
<svg class="i" style="left:1195.0px;top:155.9px" width="8" height="12" viewBox="0 0 8 12"><path d="M0.2 4.5 L4 0 L7.8 4.5Z" fill="#b4b8bf"/><path d="M0.2 6.5 L4 10.8 L7.8 6.5Z" fill="#b4b8bf"/></svg>
<span class="t sb hd" style="top:152.95px;font-size:11.70px;letter-spacing:0.366px;left:1229.00px;">Status</span>
<svg class="i" style="left:1290.5px;top:155.9px" width="8" height="12" viewBox="0 0 8 12"><path d="M0.2 4.5 L4 0 L7.8 4.5Z" fill="#b4b8bf"/><path d="M0.2 6.5 L4 10.8 L7.8 6.5Z" fill="#b4b8bf"/></svg>
<span class="t sb hd" style="top:136.95px;font-size:11.70px;letter-spacing:0.580px;left:1326.00px;">Date to</span>
<span class="t sb hd" style="top:152.95px;font-size:11.70px;letter-spacing:0.808px;left:1326.00px;">Perform</span>
<svg class="i" style="left:1376.0px;top:155.9px" width="8" height="12" viewBox="0 0 8 12"><path d="M0.2 4.5 L4 0 L7.8 4.5Z" fill="#b4b8bf"/><path d="M0.2 6.5 L4 10.8 L7.8 6.5Z" fill="#b4b8bf"/></svg>
<span class="t sb hd" style="top:152.95px;font-size:11.70px;letter-spacing:0.188px;left:1410.60px;">Site Code</span>
<svg class="i" style="left:1499.6px;top:155.9px" width="8" height="12" viewBox="0 0 8 12"><path d="M0.2 4.5 L4 0 L7.8 4.5Z" fill="#b4b8bf"/><path d="M0.2 6.5 L4 10.8 L7.8 6.5Z" fill="#b4b8bf"/></svg>
<span class="t sb hd" style="top:152.95px;font-size:11.70px;letter-spacing:0.426px;left:1534.80px;">Building Code</span>
<svg class="i" style="left:1623.8px;top:155.9px" width="8" height="12" viewBox="0 0 8 12"><path d="M0.2 4.5 L4 0 L7.8 4.5Z" fill="#b4b8bf"/><path d="M0.2 6.5 L4 10.8 L7.8 6.5Z" fill="#b4b8bf"/></svg>
<span class="t sb hd" style="top:136.95px;font-size:11.70px;letter-spacing:0.591px;left:1658.60px;">Building</span>
<span class="t sb hd" style="top:152.95px;font-size:11.70px;letter-spacing:0.254px;left:1658.60px;">System ID</span>
<svg class="i" style="left:1747.7px;top:155.9px" width="8" height="12" viewBox="0 0 8 12"><path d="M0.2 4.5 L4 0 L7.8 4.5Z" fill="#1a86f7"/><path d="M0.2 6.5 L4 10.8 L7.8 6.5Z" fill="#b4b8bf"/></svg>
<span class="t sb hd" style="top:152.95px;font-size:11.70px;letter-spacing:0.342px;left:1782.80px;">Floor Code</span>
<svg class="i" style="left:1871.9px;top:155.9px" width="8" height="12" viewBox="0 0 8 12"><path d="M0.2 4.5 L4 0 L7.8 4.5Z" fill="#b4b8bf"/><path d="M0.2 6.5 L4 10.8 L7.8 6.5Z" fill="#b4b8bf"/></svg>
<span class="t sb hd" style="top:152.95px;font-size:11.70px;letter-spacing:0.375px;left:1907.00px;">Room Code</span>
<div class="inp" style="left:843.0px;top:181px;width:102px;height:17px"></div>
<div class="inp" style="left:1410.0px;top:181px;width:102px;height:17px"></div>
<div class="inp" style="left:1534.0px;top:181px;width:102px;height:17px"></div>
<div class="inp" style="left:1658.0px;top:181px;width:102px;height:17px"></div>
<div class="inp" style="left:1782.0px;top:181px;width:102px;height:17px"></div>
<div class="inp" style="left:1906.0px;top:181px;width:102px;height:17px"></div>
<div class="inp" style="left:1141px;top:180px;width:67px;height:18px"></div>
<svg class="i" style="left:1193px;top:185px" width="10" height="8" viewBox="0 0 10 8"><path d="M1.2 1.8 L5 5.6 L8.8 1.8" fill="none" stroke="#1d2129" stroke-width="2"/></svg>
<div class="inp" style="left:1229px;top:180px;width:75px;height:18px"></div>
<svg class="i" style="left:1289px;top:185px" width="10" height="8" viewBox="0 0 10 8"><path d="M1.2 1.8 L5 5.6 L8.8 1.8" fill="none" stroke="#1d2129" stroke-width="2"/></svg>
<div class="ln" style="left:615px;top:237.0px;width:1289px"></div>
<div class="cb" style="left:633px;top:217px"></div>
<svg class="i" style="left:676.6px;top:214.6px" width="12" height="12" viewBox="0 0 12 12"><path d="M8.5 1.1 L10.9 3.5 L4.2 10.2 L0.7 11.3 L1.8 7.8 Z" fill="#878c98" stroke="#878c98" stroke-width="0.5" stroke-linejoin="round"/></svg>
<svg class="i" style="left:713.0px;top:214.0px" width="14" height="14" viewBox="0 0 14 14"><rect width="14" height="14" fill="#cccde6"/><path d="M2 11 L6.6 5.6 Q6.4 3.7 7.9 2.7 Q8.9 2.1 9.9 2.4 L8.5 4.2 L9.8 5.4 L11.4 4 Q11.6 5.5 10.5 6.5 Q9.5 7.2 8.3 6.9 L3.7 12.4 Q2.4 12.9 2 11 Z" fill="#fff"/><path d="M0 13.6H14M13.6 0V14" stroke="#c4c5dc" stroke-width="0.8"/></svg>
<span class="t " style="top:214.95px;font-size:11.70px;letter-spacing:0.411px;left:838.00px;">Windows</span>
<span class="t " style="top:214.95px;font-size:11.70px;letter-spacing:0.409px;right:716.09px;">Good</span>
<span class="t " style="top:215.16px;font-size:11.09px;letter-spacing:-0.091px;left:1224.50px;">COMPLETED</span>
<span class="t " style="top:214.95px;font-size:11.70px;letter-spacing:0.428px;left:1320.70px;">9/12/2017</span>
<span class="t " style="top:215.18px;font-size:11.01px;letter-spacing:-0.097px;left:1405.00px;">MARKET</span>
<span class="t " style="top:214.95px;font-size:11.70px;letter-spacing:0.213px;left:1529.20px;">HQ</span>
<span class="t " style="top:214.95px;font-size:11.70px;letter-spacing:0.364px;left:1777.30px;">19</span>
<span class="t " style="top:214.95px;font-size:11.70px;letter-spacing:0.000px;left:1901.00px;color:#f0a24a;">1</span>
<div class="ln" style="left:615px;top:270.0px;width:1289px"></div>
<div class="cb" style="left:633px;top:250px"></div>
<svg class="i" style="left:676.6px;top:247.6px" width="12" height="12" viewBox="0 0 12 12"><path d="M8.5 1.1 L10.9 3.5 L4.2 10.2 L0.7 11.3 L1.8 7.8 Z" fill="#878c98" stroke="#878c98" stroke-width="0.5" stroke-linejoin="round"/></svg>
<svg class="i" style="left:713.0px;top:247.0px" width="14" height="14" viewBox="0 0 14 14"><rect width="14" height="14" fill="#cccde6"/><path d="M2 11 L6.6 5.6 Q6.4 3.7 7.9 2.7 Q8.9 2.1 9.9 2.4 L8.5 4.2 L9.8 5.4 L11.4 4 Q11.6 5.5 10.5 6.5 Q9.5 7.2 8.3 6.9 L3.7 12.4 Q2.4 12.9 2 11 Z" fill="#fff"/><path d="M0 13.6H14M13.6 0V14" stroke="#c4c5dc" stroke-width="0.8"/></svg>
<span class="t " style="top:247.95px;font-size:11.70px;letter-spacing:0.458px;left:838.00px;">Doors</span>
<span class="t " style="top:247.95px;font-size:11.70px;letter-spacing:0.047px;right:716.45px;">Fair</span>
<span class="t " style="top:248.16px;font-size:11.09px;letter-spacing:-0.091px;left:1224.50px;">COMPLETED</span>
<span class="t " style="top:247.95px;font-size:11.70px;letter-spacing:0.428px;left:1320.70px;">9/12/2017</span>
<span class="t " style="top:248.18px;font-size:11.01px;letter-spacing:-0.097px;left:1405.00px;">MARKET</span>
<span class="t " style="top:247.95px;font-size:11.70px;letter-spacing:0.213px;left:1529.20px;">HQ</span>
<span class="t " style="top:247.95px;font-size:11.70px;letter-spacing:-0.026px;left:1777.30px;">B1</span>
<span class="t " style="top:247.95px;font-size:11.70px;letter-spacing:0.000px;left:1901.00px;">0</span>
<div class="ln" style="left:615px;top:303.0px;width:1289px"></div>
<div class="cb" style="left:633px;top:283px"></div>
<svg class="i" style="left:676.6px;top:280.6px" width="12" height="12" viewBox="0 0 12 12"><path d="M8.5 1.1 L10.9 3.5 L4.2 10.2 L0.7 11.3 L1.8 7.8 Z" fill="#878c98" stroke="#878c98" stroke-width="0.5" stroke-linejoin="round"/></svg>
<svg class="i" style="left:713.0px;top:280.0px" width="14" height="14" viewBox="0 0 14 14"><rect width="14" height="14" fill="#cccde6"/><path d="M2 11 L6.6 5.6 Q6.4 3.7 7.9 2.7 Q8.9 2.1 9.9 2.4 L8.5 4.2 L9.8 5.4 L11.4 4 Q11.6 5.5 10.5 6.5 Q9.5 7.2 8.3 6.9 L3.7 12.4 Q2.4 12.9 2 11 Z" fill="#fff"/><path d="M0 13.6H14M13.6 0V14" stroke="#c4c5dc" stroke-width="0.8"/></svg>
<span class="t " style="top:280.95px;font-size:11.70px;letter-spacing:0.182px;left:838.00px;">Contract Specification for HVAC Control Systems</span>
<span class="t " style="top:280.95px;font-size:11.70px;letter-spacing:0.417px;right:716.08px;">Poor</span>
<span class="t " style="top:281.16px;font-size:11.09px;letter-spacing:-0.091px;left:1224.50px;">COMPLETED</span>
<span class="t " style="top:280.95px;font-size:11.70px;letter-spacing:0.428px;left:1320.70px;">9/25/2017</span>
<span class="t " style="top:281.18px;font-size:11.01px;letter-spacing:-0.097px;left:1405.00px;">MARKET</span>
<span class="t " style="top:280.95px;font-size:11.70px;letter-spacing:0.213px;left:1529.20px;">HQ</span>
<span class="t " style="top:280.95px;font-size:11.70px;letter-spacing:-0.026px;left:1777.30px;">B1</span>
<span class="t " style="top:280.95px;font-size:11.70px;letter-spacing:0.000px;left:1901.00px;">0</span>
<div class="ln" style="left:615px;top:336.0px;width:1289px"></div>
<div class="cb" style="left:633px;top:316px"></div>
<svg class="i" style="left:676.6px;top:313.6px" width="12" height="12" viewBox="0 0 12 12"><path d="M8.5 1.1 L10.9 3.5 L4.2 10.2 L0.7 11.3 L1.8 7.8 Z" fill="#878c98" stroke="#878c98" stroke-width="0.5" stroke-linejoin="round"/></svg>
<svg class="i" style="left:713.0px;top:313.0px" width="14" height="14" viewBox="0 0 14 14"><rect width="14" height="14" fill="#cccde6"/><path d="M2 11 L6.6 5.6 Q6.4 3.7 7.9 2.7 Q8.9 2.1 9.9 2.4 L8.5 4.2 L9.8 5.4 L11.4 4 Q11.6 5.5 10.5 6.5 Q9.5 7.2 8.3 6.9 L3.7 12.4 Q2.4 12.9 2 11 Z" fill="#fff"/><path d="M0 13.6H14M13.6 0V14" stroke="#c4c5dc" stroke-width="0.8"/></svg>
<span class="t " style="top:313.95px;font-size:11.70px;letter-spacing:0.177px;left:838.00px;">Contract Awarded - HVAC Control Systems</span>
<span class="t " style="top:313.95px;font-size:11.70px;letter-spacing:0.409px;right:716.09px;">Good</span>
<span class="t " style="top:314.16px;font-size:11.09px;letter-spacing:-0.091px;left:1224.50px;">COMPLETED</span>
<span class="t " style="top:313.95px;font-size:11.70px;letter-spacing:0.428px;left:1320.70px;">9/25/2017</span>
<span class="t " style="top:314.18px;font-size:11.01px;letter-spacing:-0.097px;left:1405.00px;">MARKET</span>
<span class="t " style="top:313.95px;font-size:11.70px;letter-spacing:0.213px;left:1529.20px;">HQ</span>
<span class="t " style="top:313.95px;font-size:11.70px;letter-spacing:-0.026px;left:1777.30px;">B1</span>
<span class="t " style="top:313.95px;font-size:11.70px;letter-spacing:0.000px;left:1901.00px;">0</span>
<div class="ln" style="left:615px;top:369.0px;width:1289px"></div>
<div class="cb" style="left:633px;top:349px"></div>
<svg class="i" style="left:676.6px;top:346.6px" width="12" height="12" viewBox="0 0 12 12"><path d="M8.5 1.1 L10.9 3.5 L4.2 10.2 L0.7 11.3 L1.8 7.8 Z" fill="#878c98" stroke="#878c98" stroke-width="0.5" stroke-linejoin="round"/></svg>
<svg class="i" style="left:713.0px;top:346.0px" width="14" height="14" viewBox="0 0 14 14"><rect width="14" height="14" fill="#cccde6"/><path d="M2 11 L6.6 5.6 Q6.4 3.7 7.9 2.7 Q8.9 2.1 9.9 2.4 L8.5 4.2 L9.8 5.4 L11.4 4 Q11.6 5.5 10.5 6.5 Q9.5 7.2 8.3 6.9 L3.7 12.4 Q2.4 12.9 2 11 Z" fill="#fff"/><path d="M0 13.6H14M13.6 0V14" stroke="#c4c5dc" stroke-width="0.8"/></svg>
<span class="t " style="top:346.95px;font-size:11.70px;letter-spacing:0.207px;left:838.00px;">Letter of Intent - HVAC Control Systems Contract</span>
<span class="t " style="top:346.95px;font-size:11.70px;letter-spacing:0.417px;right:716.08px;">Poor</span>
<span class="t " style="top:347.16px;font-size:11.09px;letter-spacing:-0.091px;left:1224.50px;">COMPLETED</span>
<span class="t " style="top:346.95px;font-size:11.70px;letter-spacing:0.428px;left:1320.70px;">9/25/2017</span>
<span class="t " style="top:347.18px;font-size:11.01px;letter-spacing:-0.097px;left:1405.00px;">MARKET</span>
<span class="t " style="top:346.95px;font-size:11.70px;letter-spacing:0.213px;left:1529.20px;">HQ</span>
<span class="t " style="top:346.95px;font-size:11.70px;letter-spacing:-0.026px;left:1777.30px;">B1</span>
<span class="t " style="top:346.95px;font-size:11.70px;letter-spacing:0.000px;left:1901.00px;">0</span>
<div class="ln" style="left:615px;top:402.0px;width:1289px"></div>
<div class="cb" style="left:633px;top:382px"></div>
<svg class="i" style="left:676.6px;top:379.6px" width="12" height="12" viewBox="0 0 12 12"><path d="M8.5 1.1 L10.9 3.5 L4.2 10.2 L0.7 11.3 L1.8 7.8 Z" fill="#878c98" stroke="#878c98" stroke-width="0.5" stroke-linejoin="round"/></svg>
<svg class="i" style="left:713.0px;top:379.0px" width="14" height="14" viewBox="0 0 14 14"><rect width="14" height="14" fill="#cccde6"/><path d="M2 11 L6.6 5.6 Q6.4 3.7 7.9 2.7 Q8.9 2.1 9.9 2.4 L8.5 4.2 L9.8 5.4 L11.4 4 Q11.6 5.5 10.5 6.5 Q9.5 7.2 8.3 6.9 L3.7 12.4 Q2.4 12.9 2 11 Z" fill="#fff"/><path d="M0 13.6H14M13.6 0V14" stroke="#c4c5dc" stroke-width="0.8"/></svg>
<span class="t " style="top:379.95px;font-size:11.70px;letter-spacing:-0.022px;left:838.00px;">HVAC Controls - JFK A Testing Results</span>
<span class="t " style="top:379.95px;font-size:11.70px;letter-spacing:0.047px;right:716.45px;">Fair</span>
<span class="t " style="top:380.16px;font-size:11.09px;letter-spacing:-0.091px;left:1224.50px;">COMPLETED</span>
<span class="t " style="top:379.95px;font-size:11.70px;letter-spacing:0.428px;left:1320.70px;">9/25/2017</span>
<span class="t " style="top:380.18px;font-size:11.01px;letter-spacing:-0.097px;left:1405.00px;">MARKET</span>
<span class="t " style="top:379.95px;font-size:11.70px;letter-spacing:0.213px;left:1529.20px;">HQ</span>
<span class="t " style="top:379.95px;font-size:11.70px;letter-spacing:-0.026px;left:1777.30px;">B1</span>
<span class="t " style="top:379.95px;font-size:11.70px;letter-spacing:0.000px;left:1901.00px;">0</span>
<div class="ln" style="left:615px;top:435.0px;width:1289px"></div>
<div class="cb" style="left:633px;top:415px"></div>
<svg class="i" style="left:676.6px;top:412.6px" width="12" height="12" viewBox="0 0 12 12"><path d="M8.5 1.1 L10.9 3.5 L4.2 10.2 L0.7 11.3 L1.8 7.8 Z" fill="#878c98" stroke="#878c98" stroke-width="0.5" stroke-linejoin="round"/></svg>
<svg class="i" style="left:713.0px;top:412.0px" width="14" height="14" viewBox="0 0 14 14"><rect width="14" height="14" fill="#cccde6"/><path d="M2 11 L6.6 5.6 Q6.4 3.7 7.9 2.7 Q8.9 2.1 9.9 2.4 L8.5 4.2 L9.8 5.4 L11.4 4 Q11.6 5.5 10.5 6.5 Q9.5 7.2 8.3 6.9 L3.7 12.4 Q2.4 12.9 2 11 Z" fill="#fff"/><path d="M0 13.6H14M13.6 0V14" stroke="#c4c5dc" stroke-width="0.8"/></svg>
<span class="t " style="top:412.95px;font-size:11.70px;letter-spacing:-0.076px;left:838.00px;">HVAC Controls - JFK C Testing Results</span>
<span class="t " style="top:412.95px;font-size:11.70px;letter-spacing:0.228px;right:716.27px;">Very Good</span>
<span class="t " style="top:413.16px;font-size:11.09px;letter-spacing:-0.091px;left:1224.50px;">COMPLETED</span>
<span class="t " style="top:412.95px;font-size:11.70px;letter-spacing:0.428px;left:1320.70px;">9/25/2017</span>
<span class="t " style="top:413.18px;font-size:11.01px;letter-spacing:-0.097px;left:1405.00px;">MARKET</span>
<span class="t " style="top:412.95px;font-size:11.70px;letter-spacing:0.213px;left:1529.20px;">HQ</span>
<span class="t " style="top:412.95px;font-size:11.70px;letter-spacing:-0.026px;left:1777.30px;">B1</span>
<span class="t " style="top:412.95px;font-size:11.70px;letter-spacing:0.000px;left:1901.00px;">0</span>
<div class="ln" style="left:615px;top:468.0px;width:1289px"></div>
<div class="cb" style="left:633px;top:448px"></div>
<svg class="i" style="left:676.6px;top:445.6px" width="12" height="12" viewBox="0 0 12 12"><path d="M8.5 1.1 L10.9 3.5 L4.2 10.2 L0.7 11.3 L1.8 7.8 Z" fill="#878c98" stroke="#878c98" stroke-width="0.5" stroke-linejoin="round"/></svg>
<svg class="i" style="left:713.0px;top:445.0px" width="14" height="14" viewBox="0 0 14 14"><rect width="14" height="14" fill="#cccde6"/><path d="M2 11 L6.6 5.6 Q6.4 3.7 7.9 2.7 Q8.9 2.1 9.9 2.4 L8.5 4.2 L9.8 5.4 L11.4 4 Q11.6 5.5 10.5 6.5 Q9.5 7.2 8.3 6.9 L3.7 12.4 Q2.4 12.9 2 11 Z" fill="#fff"/><path d="M0 13.6H14M13.6 0V14" stroke="#c4c5dc" stroke-width="0.8"/></svg>
<span class="t " style="top:445.95px;font-size:11.70px;letter-spacing:0.147px;left:838.00px;">Contract Specification for Elevators and Escala...</span>
<span class="t " style="top:445.95px;font-size:11.70px;letter-spacing:0.228px;right:716.27px;">Very Good</span>
<span class="t " style="top:446.16px;font-size:11.09px;letter-spacing:-0.091px;left:1224.50px;">COMPLETED</span>
<span class="t " style="top:445.95px;font-size:11.70px;letter-spacing:0.428px;left:1320.70px;">9/25/2017</span>
<span class="t " style="top:446.18px;font-size:11.01px;letter-spacing:-0.097px;left:1405.00px;">MARKET</span>
<span class="t " style="top:445.95px;font-size:11.70px;letter-spacing:0.213px;left:1529.20px;">HQ</span>
<span class="t " style="top:445.95px;font-size:11.70px;letter-spacing:-0.026px;left:1777.30px;">B1</span>
<span class="t " style="top:445.95px;font-size:11.70px;letter-spacing:0.000px;left:1901.00px;">0</span>
<div class="ln" style="left:615px;top:501.0px;width:1289px"></div>
<div class="cb" style="left:633px;top:481px"></div>
<svg class="i" style="left:676.6px;top:478.6px" width="12" height="12" viewBox="0 0 12 12"><path d="M8.5 1.1 L10.9 3.5 L4.2 10.2 L0.7 11.3 L1.8 7.8 Z" fill="#878c98" stroke="#878c98" stroke-width="0.5" stroke-linejoin="round"/></svg>
<svg class="i" style="left:713.0px;top:478.0px" width="14" height="14" viewBox="0 0 14 14"><rect width="14" height="14" fill="#cccde6"/><path d="M2 11 L6.6 5.6 Q6.4 3.7 7.9 2.7 Q8.9 2.1 9.9 2.4 L8.5 4.2 L9.8 5.4 L11.4 4 Q11.6 5.5 10.5 6.5 Q9.5 7.2 8.3 6.9 L3.7 12.4 Q2.4 12.9 2 11 Z" fill="#fff"/><path d="M0 13.6H14M13.6 0V14" stroke="#c4c5dc" stroke-width="0.8"/></svg>
<span class="t " style="top:478.95px;font-size:11.70px;letter-spacing:0.191px;left:838.00px;">Contract Awarded - Elevators and Escalators</span>
<span class="t " style="top:478.95px;font-size:11.70px;letter-spacing:0.228px;right:716.27px;">Very Good</span>
<span class="t " style="top:479.16px;font-size:11.09px;letter-spacing:-0.091px;left:1224.50px;">COMPLETED</span>
<span class="t " style="top:478.95px;font-size:11.70px;letter-spacing:0.428px;left:1320.70px;">9/25/2017</span>
<span class="t " style="top:479.18px;font-size:11.01px;letter-spacing:-0.097px;left:1405.00px;">MARKET</span>
<span class="t " style="top:478.95px;font-size:11.70px;letter-spacing:0.213px;left:1529.20px;">HQ</span>
<span class="t " style="top:478.95px;font-size:11.70px;letter-spacing:-0.026px;left:1777.30px;">B1</span>
<span class="t " style="top:478.95px;font-size:11.70px;letter-spacing:0.000px;left:1901.00px;">0</span>
<div class="ln" style="left:615px;top:534.0px;width:1289px"></div>
<div class="cb" style="left:633px;top:514px"></div>
<svg class="i" style="left:676.6px;top:511.6px" width="12" height="12" viewBox="0 0 12 12"><path d="M8.5 1.1 L10.9 3.5 L4.2 10.2 L0.7 11.3 L1.8 7.8 Z" fill="#878c98" stroke="#878c98" stroke-width="0.5" stroke-linejoin="round"/></svg>
<svg class="i" style="left:713.0px;top:511.0px" width="14" height="14" viewBox="0 0 14 14"><rect width="14" height="14" fill="#cccde6"/><path d="M2 11 L6.6 5.6 Q6.4 3.7 7.9 2.7 Q8.9 2.1 9.9 2.4 L8.5 4.2 L9.8 5.4 L11.4 4 Q11.6 5.5 10.5 6.5 Q9.5 7.2 8.3 6.9 L3.7 12.4 Q2.4 12.9 2 11 Z" fill="#fff"/><path d="M0 13.6H14M13.6 0V14" stroke="#c4c5dc" stroke-width="0.8"/></svg>
<span class="t " style="top:511.95px;font-size:11.70px;letter-spacing:0.217px;left:838.00px;">Letter of Intent - Conveying Systems Contract</span>
<span class="t " style="top:511.95px;font-size:11.70px;letter-spacing:0.409px;right:716.09px;">Good</span>
<span class="t " style="top:512.16px;font-size:11.09px;letter-spacing:-0.091px;left:1224.50px;">COMPLETED</span>
<span class="t " style="top:511.95px;font-size:11.70px;letter-spacing:0.428px;left:1320.70px;">9/25/2017</span>
<span class="t " style="top:512.18px;font-size:11.01px;letter-spacing:-0.097px;left:1405.00px;">MARKET</span>
<span class="t " style="top:511.95px;font-size:11.70px;letter-spacing:0.213px;left:1529.20px;">HQ</span>
<span class="t " style="top:511.95px;font-size:11.70px;letter-spacing:-0.026px;left:1777.30px;">B1</span>
<span class="t " style="top:511.95px;font-size:11.70px;letter-spacing:0.000px;left:1901.00px;">0</span>
<div class="ln" style="left:615px;top:567.0px;width:1289px"></div>
<div class="cb" style="left:633px;top:547px"></div>
<svg class="i" style="left:676.6px;top:544.6px" width="12" height="12" viewBox="0 0 12 12"><path d="M8.5 1.1 L10.9 3.5 L4.2 10.2 L0.7 11.3 L1.8 7.8 Z" fill="#878c98" stroke="#878c98" stroke-width="0.5" stroke-linejoin="round"/></svg>
<svg class="i" style="left:713.0px;top:544.0px" width="14" height="14" viewBox="0 0 14 14"><rect width="14" height="14" fill="#cccde6"/><path d="M2 11 L6.6 5.6 Q6.4 3.7 7.9 2.7 Q8.9 2.1 9.9 2.4 L8.5 4.2 L9.8 5.4 L11.4 4 Q11.6 5.5 10.5 6.5 Q9.5 7.2 8.3 6.9 L3.7 12.4 Q2.4 12.9 2 11 Z" fill="#fff"/><path d="M0 13.6H14M13.6 0V14" stroke="#c4c5dc" stroke-width="0.8"/></svg>
<span class="t " style="top:544.95px;font-size:11.70px;letter-spacing:-0.016px;left:838.00px;">Elevator - JFK A - Elev-01 - Construction Check...</span>
<span class="t " style="top:544.95px;font-size:11.70px;letter-spacing:0.409px;right:716.09px;">Good</span>
<span class="t " style="top:545.16px;font-size:11.09px;letter-spacing:-0.091px;left:1224.50px;">COMPLETED</span>
<span class="t " style="top:544.95px;font-size:11.70px;letter-spacing:0.428px;left:1320.70px;">9/25/2017</span>
<span class="t " style="top:545.18px;font-size:11.01px;letter-spacing:-0.097px;left:1405.00px;">MARKET</span>
<span class="t " style="top:544.95px;font-size:11.70px;letter-spacing:0.213px;left:1529.20px;">HQ</span>
<span class="t " style="top:544.95px;font-size:11.70px;letter-spacing:-0.026px;left:1777.30px;">B1</span>
<span class="t " style="top:544.95px;font-size:11.70px;letter-spacing:0.000px;left:1901.00px;">0</span>
<div class="ln" style="left:615px;top:600.0px;width:1289px"></div>
<div class="cb" style="left:633px;top:580px"></div>
<svg class="i" style="left:676.6px;top:577.6px" width="12" height="12" viewBox="0 0 12 12"><path d="M8.5 1.1 L10.9 3.5 L4.2 10.2 L0.7 11.3 L1.8 7.8 Z" fill="#878c98" stroke="#878c98" stroke-width="0.5" stroke-linejoin="round"/></svg>
<svg class="i" style="left:713.0px;top:577.0px" width="14" height="14" viewBox="0 0 14 14"><rect width="14" height="14" fill="#cccde6"/><path d="M2 11 L6.6 5.6 Q6.4 3.7 7.9 2.7 Q8.9 2.1 9.9 2.4 L8.5 4.2 L9.8 5.4 L11.4 4 Q11.6 5.5 10.5 6.5 Q9.5 7.2 8.3 6.9 L3.7 12.4 Q2.4 12.9 2 11 Z" fill="#fff"/><path d="M0 13.6H14M13.6 0V14" stroke="#c4c5dc" stroke-width="0.8"/></svg>
<span class="t " style="top:577.95px;font-size:11.70px;letter-spacing:-0.039px;left:838.00px;">Elevator - JFK B - Elev-01 - Construction Check...</span>
<span class="t " style="top:577.95px;font-size:11.70px;letter-spacing:0.228px;right:716.27px;">Very Good</span>
<span class="t " style="top:578.16px;font-size:11.09px;letter-spacing:-0.091px;left:1224.50px;">COMPLETED</span>
<span class="t " style="top:577.95px;font-size:11.70px;letter-spacing:0.428px;left:1320.70px;">9/25/2017</span>
<span class="t " style="top:578.18px;font-size:11.01px;letter-spacing:-0.097px;left:1405.00px;">MARKET</span>
<span class="t " style="top:577.95px;font-size:11.70px;letter-spacing:0.213px;left:1529.20px;">HQ</span>
<span class="t " style="top:577.95px;font-size:11.70px;letter-spacing:-0.026px;left:1777.30px;">B1</span>
<span class="t " style="top:577.95px;font-size:11.70px;letter-spacing:0.000px;left:1901.00px;">0</span>
<div class="ln" style="left:615px;top:633.0px;width:1289px"></div>
<div class="cb" style="left:633px;top:613px"></div>
<svg class="i" style="left:676.6px;top:610.6px" width="12" height="12" viewBox="0 0 12 12"><path d="M8.5 1.1 L10.9 3.5 L4.2 10.2 L0.7 11.3 L1.8 7.8 Z" fill="#878c98" stroke="#878c98" stroke-width="0.5" stroke-linejoin="round"/></svg>
<svg class="i" style="left:713.0px;top:610.0px" width="14" height="14" viewBox="0 0 14 14"><rect width="14" height="14" fill="#cccde6"/><path d="M2 11 L6.6 5.6 Q6.4 3.7 7.9 2.7 Q8.9 2.1 9.9 2.4 L8.5 4.2 L9.8 5.4 L11.4 4 Q11.6 5.5 10.5 6.5 Q9.5 7.2 8.3 6.9 L3.7 12.4 Q2.4 12.9 2 11 Z" fill="#fff"/><path d="M0 13.6H14M13.6 0V14" stroke="#c4c5dc" stroke-width="0.8"/></svg>
<span class="t " style="top:610.95px;font-size:11.70px;letter-spacing:-0.056px;left:838.00px;">Elevator - JFK C - Elev-01 - Construction Check...</span>
<span class="t " style="top:610.95px;font-size:11.70px;letter-spacing:0.409px;right:716.09px;">Good</span>
<span class="t " style="top:611.16px;font-size:11.09px;letter-spacing:-0.091px;left:1224.50px;">COMPLETED</span>
<span class="t " style="top:610.95px;font-size:11.70px;letter-spacing:0.428px;left:1320.70px;">9/25/2017</span>
<span class="t " style="top:611.18px;font-size:11.01px;letter-spacing:-0.097px;left:1405.00px;">MARKET</span>
<span class="t " style="top:610.95px;font-size:11.70px;letter-spacing:0.213px;left:1529.20px;">HQ</span>
<span class="t " style="top:610.95px;font-size:11.70px;letter-spacing:-0.026px;left:1777.30px;">B1</span>
<span class="t " style="top:610.95px;font-size:11.70px;letter-spacing:0.000px;left:1901.00px;">0</span>
<div class="ln" style="left:615px;top:666.0px;width:1289px"></div>
<div class="cb" style="left:633px;top:646px"></div>
<svg class="i" style="left:676.6px;top:643.6px" width="12" height="12" viewBox="0 0 12 12"><path d="M8.5 1.1 L10.9 3.5 L4.2 10.2 L0.7 11.3 L1.8 7.8 Z" fill="#878c98" stroke="#878c98" stroke-width="0.5" stroke-linejoin="round"/></svg>
<svg class="i" style="left:713.0px;top:643.0px" width="14" height="14" viewBox="0 0 14 14"><rect width="14" height="14" fill="#04047e"/><path d="M2 11 L6.6 5.6 Q6.4 3.7 7.9 2.7 Q8.9 2.1 9.9 2.4 L8.5 4.2 L9.8 5.4 L11.4 4 Q11.6 5.5 10.5 6.5 Q9.5 7.2 8.3 6.9 L3.7 12.4 Q2.4 12.9 2 11 Z" fill="#fff"/><path d="M0 13.6H14M13.6 0V14" stroke="#7d7d96" stroke-width="0.8"/></svg>
<span class="t " style="top:644.02px;font-size:11.48px;letter-spacing:-0.053px;left:838.00px;">Escalator - JFK Center (A/B/C) - ESC-01 - Const...</span>
<span class="t " style="top:643.95px;font-size:11.70px;letter-spacing:0.357px;right:716.14px;">Not Entered</span>
<span class="t " style="top:644.27px;font-size:10.76px;letter-spacing:-0.108px;left:1224.50px;">IN PROGRESS</span>
<span class="t " style="top:643.95px;font-size:11.70px;letter-spacing:0.428px;left:1320.70px;">9/25/2017</span>
<span class="t " style="top:644.18px;font-size:11.01px;letter-spacing:-0.097px;left:1405.00px;">MARKET</span>
<span class="t " style="top:643.95px;font-size:11.70px;letter-spacing:0.213px;left:1529.20px;">HQ</span>
<span class="t " style="top:643.95px;font-size:11.70px;letter-spacing:-0.026px;left:1777.30px;">B1</span>
<span class="t " style="top:643.95px;font-size:11.70px;letter-spacing:0.000px;left:1901.00px;">0</span>
<div class="ln" style="left:615px;top:699.0px;width:1289px"></div>
<div class="cb" style="left:633px;top:679px"></div>
<svg class="i" style="left:676.6px;top:676.6px" width="12" height="12" viewBox="0 0 12 12"><path d="M8.5 1.1 L10.9 3.5 L4.2 10.2 L0.7 11.3 L1.8 7.8 Z" fill="#878c98" stroke="#878c98" stroke-width="0.5" stroke-linejoin="round"/></svg>
<svg class="i" style="left:713.0px;top:676.0px" width="14" height="14" viewBox="0 0 14 14"><rect width="14" height="14" fill="#04047e"/><path d="M2 11 L6.6 5.6 Q6.4 3.7 7.9 2.7 Q8.9 2.1 9.9 2.4 L8.5 4.2 L9.8 5.4 L11.4 4 Q11.6 5.5 10.5 6.5 Q9.5 7.2 8.3 6.9 L3.7 12.4 Q2.4 12.9 2 11 Z" fill="#fff"/><path d="M0 13.6H14M13.6 0V14" stroke="#7d7d96" stroke-width="0.8"/></svg>
<span class="t " style="top:676.95px;font-size:11.70px;letter-spacing:-0.053px;left:838.00px;">HVAC Controls - JFK B Testing Results</span>
<span class="t " style="top:676.95px;font-size:11.70px;letter-spacing:0.357px;right:716.14px;">Not Entered</span>
<span class="t " style="top:677.27px;font-size:10.76px;letter-spacing:-0.108px;left:1224.50px;">IN PROGRESS</span>
<span class="t " style="top:676.95px;font-size:11.70px;letter-spacing:0.428px;left:1320.70px;">9/25/2017</span>
<span class="t " style="top:677.18px;font-size:11.01px;letter-spacing:-0.097px;left:1405.00px;">MARKET</span>
<span class="t " style="top:676.95px;font-size:11.70px;letter-spacing:0.213px;left:1529.20px;">HQ</span>
<span class="t " style="top:676.95px;font-size:11.70px;letter-spacing:-0.026px;left:1777.30px;">B1</span>
<span class="t " style="top:676.95px;font-size:11.70px;letter-spacing:0.000px;left:1901.00px;">0</span>
<div class="ln" style="left:615px;top:732.0px;width:1289px"></div>
<div class="cb" style="left:633px;top:712px"></div>
<svg class="i" style="left:676.6px;top:709.6px" width="12" height="12" viewBox="0 0 12 12"><path d="M8.5 1.1 L10.9 3.5 L4.2 10.2 L0.7 11.3 L1.8 7.8 Z" fill="#878c98" stroke="#878c98" stroke-width="0.5" stroke-linejoin="round"/></svg>
<svg class="i" style="left:713.0px;top:709.0px" width="14" height="14" viewBox="0 0 14 14"><rect width="14" height="14" fill="#cccde6"/><path d="M2 11 L6.6 5.6 Q6.4 3.7 7.9 2.7 Q8.9 2.1 9.9 2.4 L8.5 4.2 L9.8 5.4 L11.4 4 Q11.6 5.5 10.5 6.5 Q9.5 7.2 8.3 6.9 L3.7 12.4 Q2.4 12.9 2 11 Z" fill="#fff"/><path d="M0 13.6H14M13.6 0V14" stroke="#c4c5dc" stroke-width="0.8"/></svg>
<span class="t " style="top:709.95px;font-size:11.70px;letter-spacing:0.248px;left:838.00px;">Walls (vapor barriers, weeps, building joints)</span>
<span class="t " style="top:709.95px;font-size:11.70px;letter-spacing:0.357px;right:716.14px;">Not Entered</span>
<span class="t " style="top:709.95px;font-size:11.70px;letter-spacing:0.518px;left:1224.50px;">N/A</span>
<span class="t " style="top:709.95px;font-size:11.70px;letter-spacing:0.428px;left:1320.70px;">9/12/2017</span>
<span class="t " style="top:710.18px;font-size:11.01px;letter-spacing:-0.097px;left:1405.00px;">MARKET</span>
<span class="t " style="top:709.95px;font-size:11.70px;letter-spacing:0.213px;left:1529.20px;">HQ</span>
<span class="t " style="top:710.27px;font-size:10.76px;letter-spacing:-0.450px;left:1777.30px;">RF</span>
<span class="t " style="top:709.95px;font-size:11.70px;letter-spacing:0.000px;left:1901.00px;">0</span>
<div class="ln" style="left:615px;top:765.0px;width:1289px"></div>
<div class="cb" style="left:633px;top:745px"></div>
<svg class="i" style="left:676.6px;top:742.6px" width="12" height="12" viewBox="0 0 12 12"><path d="M8.5 1.1 L10.9 3.5 L4.2 10.2 L0.7 11.3 L1.8 7.8 Z" fill="#878c98" stroke="#878c98" stroke-width="0.5" stroke-linejoin="round"/></svg>
<svg class="i" style="left:713.0px;top:742.0px" width="14" height="14" viewBox="0 0 14 14"><rect width="14" height="14" fill="#cccde6"/><path d="M2 11 L6.6 5.6 Q6.4 3.7 7.9 2.7 Q8.9 2.1 9.9 2.4 L8.5 4.2 L9.8 5.4 L11.4 4 Q11.6 5.5 10.5 6.5 Q9.5 7.2 8.3 6.9 L3.7 12.4 Q2.4 12.9 2 11 Z" fill="#fff"/><path d="M0 13.6H14M13.6 0V14" stroke="#c4c5dc" stroke-width="0.8"/></svg>
<span class="t " style="top:742.95px;font-size:11.70px;letter-spacing:0.006px;left:838.00px;">Sequence control, AHU, H&amp;V (PVT)</span>
<span class="t " style="top:742.95px;font-size:11.70px;letter-spacing:0.228px;right:716.27px;">Very Good</span>
<span class="t " style="top:742.95px;font-size:11.70px;letter-spacing:0.518px;left:1224.50px;">N/A</span>
<span class="t " style="top:742.95px;font-size:11.70px;letter-spacing:0.428px;left:1320.70px;">9/25/2017</span>
<span class="t " style="top:743.18px;font-size:11.01px;letter-spacing:-0.097px;left:1405.00px;">MARKET</span>
<span class="t " style="top:742.95px;font-size:11.70px;letter-spacing:0.213px;left:1529.20px;">HQ</span>
<span class="t " style="top:742.95px;font-size:11.70px;letter-spacing:-0.026px;left:1777.30px;">B1</span>
<span class="t " style="top:742.95px;font-size:11.70px;letter-spacing:0.000px;left:1901.00px;">0</span>
<div class="ln" style="left:615px;top:798.0px;width:1289px"></div>
<div class="cb" style="left:633px;top:778px"></div>
<svg class="i" style="left:676.6px;top:775.6px" width="12" height="12" viewBox="0 0 12 12"><path d="M8.5 1.1 L10.9 3.5 L4.2 10.2 L0.7 11.3 L1.8 7.8 Z" fill="#878c98" stroke="#878c98" stroke-width="0.5" stroke-linejoin="round"/></svg>
<svg class="i" style="left:713.0px;top:775.0px" width="14" height="14" viewBox="0 0 14 14"><rect width="14" height="14" fill="#cccde6"/><path d="M2 11 L6.6 5.6 Q6.4 3.7 7.9 2.7 Q8.9 2.1 9.9 2.4 L8.5 4.2 L9.8 5.4 L11.4 4 Q11.6 5.5 10.5 6.5 Q9.5 7.2 8.3 6.9 L3.7 12.4 Q2.4 12.9 2 11 Z" fill="#fff"/><path d="M0 13.6H14M13.6 0V14" stroke="#c4c5dc" stroke-width="0.8"/></svg>
<span class="t " style="top:775.95px;font-size:11.70px;letter-spacing:0.183px;left:838.00px;">Elevators Construction Checklist - 100% - Approved</span>
<span class="t " style="top:775.95px;font-size:11.70px;letter-spacing:0.047px;right:716.45px;">Fair</span>
<span class="t " style="top:775.95px;font-size:11.70px;letter-spacing:0.518px;left:1224.50px;">N/A</span>
<span class="t " style="top:775.95px;font-size:11.70px;letter-spacing:0.428px;left:1320.70px;">9/25/2017</span>
<span class="t " style="top:776.18px;font-size:11.01px;letter-spacing:-0.097px;left:1405.00px;">MARKET</span>
<span class="t " style="top:775.95px;font-size:11.70px;letter-spacing:0.213px;left:1529.20px;">HQ</span>
<span class="t " style="top:775.95px;font-size:11.70px;letter-spacing:-0.026px;left:1777.30px;">B1</span>
<span class="t " style="top:775.95px;font-size:11.70px;letter-spacing:0.000px;left:1901.00px;">0</span>
<div class="ln" style="left:615px;top:831.0px;width:1289px"></div>
<div class="cb" style="left:633px;top:811px"></div>
<svg class="i" style="left:676.6px;top:808.6px" width="12" height="12" viewBox="0 0 12 12"><path d="M8.5 1.1 L10.9 3.5 L4.2 10.2 L0.7 11.3 L1.8 7.8 Z" fill="#878c98" stroke="#878c98" stroke-width="0.5" stroke-linejoin="round"/></svg>
<svg class="i" style="left:713.0px;top:808.0px" width="14" height="14" viewBox="0 0 14 14"><rect width="14" height="14" fill="#cccde6"/><path d="M2 11 L6.6 5.6 Q6.4 3.7 7.9 2.7 Q8.9 2.1 9.9 2.4 L8.5 4.2 L9.8 5.4 L11.4 4 Q11.6 5.5 10.5 6.5 Q9.5 7.2 8.3 6.9 L3.7 12.4 Q2.4 12.9 2 11 Z" fill="#fff"/><path d="M0 13.6H14M13.6 0V14" stroke="#c4c5dc" stroke-width="0.8"/></svg>
<span class="t " style="top:808.95px;font-size:11.70px;letter-spacing:0.149px;left:838.00px;">Escalators Construction Checklist - 100% - Appr...</span>
<span class="t " style="top:808.95px;font-size:11.70px;letter-spacing:0.228px;right:716.27px;">Very Good</span>
<span class="t " style="top:808.95px;font-size:11.70px;letter-spacing:0.518px;left:1224.50px;">N/A</span>
<span class="t " style="top:808.95px;font-size:11.70px;letter-spacing:0.428px;left:1320.70px;">9/25/2017</span>
<span class="t " style="top:809.18px;font-size:11.01px;letter-spacing:-0.097px;left:1405.00px;">MARKET</span>
<span class="t " style="top:808.95px;font-size:11.70px;letter-spacing:0.213px;left:1529.20px;">HQ</span>
<span class="t " style="top:808.95px;font-size:11.70px;letter-spacing:-0.026px;left:1777.30px;">B1</span>
<span class="t " style="top:808.95px;font-size:11.70px;letter-spacing:0.000px;left:1901.00px;">0</span>
<div class="abs" style="left:1903.5px;top:205px;width:16px;height:625px;background:#fff"></div>
</body></html>
